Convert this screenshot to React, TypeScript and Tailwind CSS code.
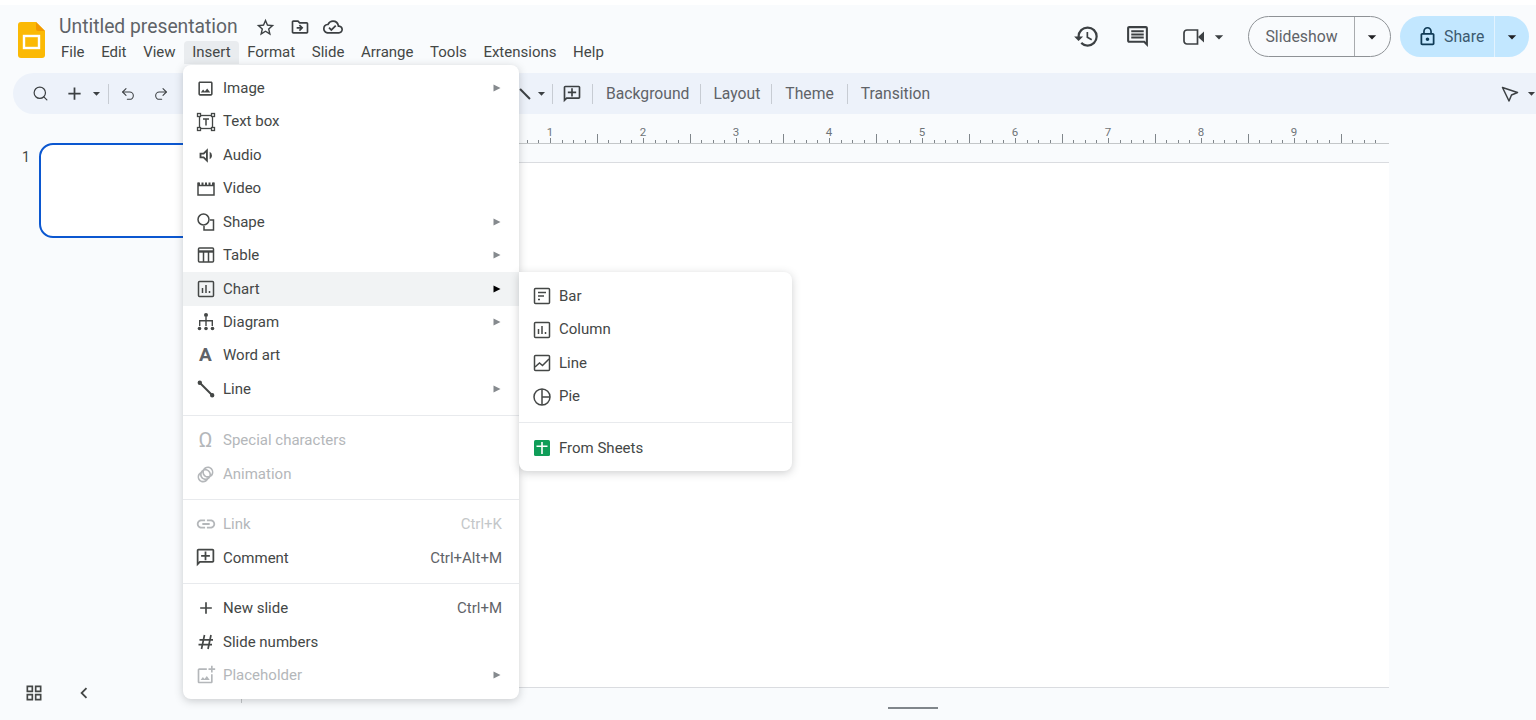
import type { ReactNode } from "react";
import { Redo2, Search, Undo2 } from "lucide-react";
import {
  MdAdd, MdArrowDropDown, MdChevronLeft, MdHistory, MdLink, MdLockOutline, MdOutlineAddComment,
  MdOutlineAddPhotoAlternate, MdOutlineAnimation, MdOutlineCloudDone, MdOutlineComment,
  MdOutlineDriveFileMove, MdOutlineGridView, MdOutlineImage, MdOutlineVolumeDown,
  MdStarBorder,
} from "react-icons/md";

const MENUS = ["File", "Edit", "View", "Insert", "Format", "Slide", "Arrange", "Tools", "Extensions", "Help"];

function Stroke({ children }: { children: ReactNode }) {
  return (
    <svg width="20" height="20" viewBox="0 0 20 20" fill="none" stroke="currentColor" strokeWidth="1.5">
      {children}
    </svg>
  );
}

const TextBoxIcon = () => (
  <Stroke>
    <rect x="3.5" y="3.5" width="13" height="13" strokeWidth="1.3" />
    <rect x="1.5" y="1.5" width="3" height="3" fill="white" strokeWidth="1.3" />
    <rect x="15.5" y="1.5" width="3" height="3" fill="white" strokeWidth="1.3" />
    <rect x="1.5" y="15.5" width="3" height="3" fill="white" strokeWidth="1.3" />
    <rect x="15.5" y="15.5" width="3" height="3" fill="white" strokeWidth="1.3" />
    <path d="M7 7h6M10 7v6.5" />
  </Stroke>
);
const VideoIcon = () => (
  <Stroke>
    <path d="M2 3.5V16h16V3.5" />
    <path d="M2 6.5h16" />
    <path d="M2 5h16" strokeWidth="3" strokeDasharray="2 1.5" />
  </Stroke>
);
const ShapeIcon = () => (
  <Stroke>
    <circle cx="7.5" cy="7.5" r="5.5" />
    <path d="M14 8h3.5v10H8v-4" />
  </Stroke>
);
const TableIcon = () => (
  <Stroke>
    <rect x="2.5" y="3" width="15" height="14" rx="1" />
    <path d="M2.5 6.5h15" strokeWidth="2.4" />
    <path d="M7.5 7v10M12.5 7v10" />
  </Stroke>
);
const ChartIcon = () => (
  <Stroke>
    <rect x="2.5" y="2.5" width="15" height="15" rx="1" />
    <path d="M6.5 14V9M10 14V6M13.5 14v-2" />
  </Stroke>
);
const BarIcon = () => (
  <Stroke>
    <rect x="2.5" y="2.5" width="15" height="15" rx="1" />
    <path d="M6 6.5h8M6 10h6M6 13.5h2" />
  </Stroke>
);
const LineChartIcon = () => (
  <Stroke>
    <rect x="2.5" y="2.5" width="15" height="15" rx="1" />
    <path d="M3 14l4.5-4 3 2.5L17 6" />
  </Stroke>
);
const PieIcon = () => (
  <Stroke>
    <circle cx="10" cy="10" r="8" />
    <path d="M10 2v16M10 10h8" />
  </Stroke>
);
const DiagramIcon = () => (
  <svg width="20" height="20" viewBox="0 0 20 20" fill="currentColor">
    <circle cx="10" cy="3" r="2" />
    <path d="M9.3 5h1.4v9H9.3zM3 8h14v1.4H3z" />
    <path d="M3 8h1.4v6H3zM15.6 8H17v6h-1.4z" />
    <circle cx="3.5" cy="16.5" r="1.8" />
    <circle cx="10" cy="16.5" r="1.8" />
    <circle cx="16.5" cy="16.5" r="1.8" />
  </svg>
);
const LineIcon = () => (
  <svg width="20" height="20" viewBox="0 0 20 20" fill="currentColor" stroke="currentColor" strokeWidth="2">
    <path d="M4 4L16 16" />
    <circle cx="3.8" cy="3.8" r="1.2" />
    <circle cx="16.2" cy="16.2" r="1.2" />
  </svg>
);
const HashIcon = () => (
  <svg width="20" height="20" viewBox="0 0 20 20" fill="none" stroke="currentColor" strokeWidth="1.7">
    <path d="M8.5 3L5.5 17M15 3L12 17M3.5 7.8H17M2.5 12.6H16" />
  </svg>
);
const SheetsIcon = () => (
  <svg width="16" height="16" viewBox="0 0 16 16">
    <rect width="16" height="16" rx="1.5" fill="#0f9d58" />
    <path d="M2.5 5.5h11v1.5H8.8v7H7.2V7H2.5zM7.2 2h1.6v3.5H7.2z" fill="white" />
  </svg>
);
const CursorIcon = () => (
  <svg width="20" height="20" viewBox="0 0 20 20" fill="none" stroke="currentColor" strokeWidth="1.5" strokeLinejoin="round" className="ml-auto">
    <path d="M2.5 3.5L17.5 8.5l-6 2.5-2.5 6z" />
  </svg>
);
const MeetIcon = () => (
  <svg width="22" height="18" viewBox="0 0 22 18" fill="none" stroke="currentColor" strokeWidth="1.7" className="ml-[33px]">
    <path d="M4 2h10.5v14H4a3 3 0 0 1-3-3V5a3 3 0 0 1 3-3z" />
    <path d="M15 9l6-5.5v11z" fill="currentColor" stroke="none" />
  </svg>
);

function Arrow({ dark }: { dark?: boolean }) {
  return (
    <svg width="8" height="8" viewBox="0 0 8 8" className={dark ? "text-black" : "text-[#858a8e]"}>
      <path d="M0.5 0.5L7.5 4L0.5 7.5z" fill="currentColor" />
    </svg>
  );
}

type Item = { icon: ReactNode; label: string; arrow?: boolean; active?: boolean; off?: boolean; keys?: string };

function Row({ icon, label, arrow, active, off, keys }: Item) {
  return (
    <div className={`flex h-[33.45px] items-center pl-[11.5px] pr-[17px] ${active ? "bg-[#f1f3f4]" : ""} ${off ? "text-[#b4b7ba]" : "text-[#444746]"}`}>
      <span className="flex h-[22px] w-[22px] items-center justify-center text-[19px]">{icon}</span>
      <span className="ml-[6.5px] flex-1 text-[15px]">{label}</span>
      {keys && <span className={`text-[15px] ${off ? "text-[#c4c7c9]" : "text-[#5f6368]"}`}>{keys}</span>}
      {arrow && <span className="mr-[1px] flex"><Arrow dark={active} /></span>}
    </div>
  );
}

const Divider = ({ first }: { first?: boolean }) => (
  <div className={`mb-[8px] h-[1px] bg-[#e8eaed] ${first ? "mt-[9px]" : "mt-[8px]"}`} />
);

const GROUP_ONE: Item[] = [
  { icon: <MdOutlineImage />, label: "Image", arrow: true },
  { icon: <TextBoxIcon />, label: "Text box" },
  { icon: <MdOutlineVolumeDown className="text-[23px]" />, label: "Audio" },
  { icon: <VideoIcon />, label: "Video" },
  { icon: <ShapeIcon />, label: "Shape", arrow: true },
  { icon: <TableIcon />, label: "Table", arrow: true },
  { icon: <ChartIcon />, label: "Chart", arrow: true, active: true },
  { icon: <DiagramIcon />, label: "Diagram", arrow: true },
  { icon: <span className="text-[19px] font-bold text-[#5f6368]">A</span>, label: "Word art" },
  { icon: <LineIcon />, label: "Line", arrow: true },
];
const GROUP_TWO: Item[] = [
  { icon: <span className="text-[21px]">Ω</span>, label: "Special characters", off: true },
  { icon: <MdOutlineAnimation />, label: "Animation", off: true },
];
const GROUP_THREE: Item[] = [
  { icon: <MdLink className="text-[22px]" />, label: "Link", off: true, keys: "Ctrl+K" },
  { icon: <MdOutlineAddComment className="-scale-x-100 text-[21px]" />, label: "Comment", keys: "Ctrl+Alt+M" },
];
const GROUP_FOUR: Item[] = [
  { icon: <MdAdd className="text-[20px]" />, label: "New slide", keys: "Ctrl+M" },
  { icon: <HashIcon />, label: "Slide numbers" },
  { icon: <MdOutlineAddPhotoAlternate className="text-[20px]" />, label: "Placeholder", arrow: true, off: true },
];
const CHART_ITEMS: Item[] = [
  { icon: <BarIcon />, label: "Bar" },
  { icon: <ChartIcon />, label: "Column" },
  { icon: <LineChartIcon />, label: "Line" },
  { icon: <PieIcon />, label: "Pie" },
];

function Ruler() {
  const ticks = Array.from({ length: 80 }, (_, k) => k);
  return (
    <svg width="932" height="30" className="block">
      <path d="M0 29.5H932" stroke="#c4c7c9" />
      {ticks.map((k) => {
        const x = Math.round(k * 11.625) + 0.5;
        const top = k % 8 === 4 ? 20 : k % 8 === 0 ? 24 : 26;
        return <path key={k} d={`M${x} ${top}V29`} stroke="#80868b" />;
      })}
      {[1, 2, 3, 4, 5, 6, 7, 8, 9].map((n) => (
        <text key={n} x={n * 93} y="22" textAnchor="middle" fontSize="11.5" fill="#6f7478">{n}</text>
      ))}
    </svg>
  );
}

const Sep = ({ className }: { className: string }) => <div className={`h-5 w-[1px] shrink-0 bg-[#c7ccd3] ${className}`} />;

export default function App() {
  return (
    <div className="relative h-[720px] w-[1536px] overflow-hidden bg-[#f9fbfd] font-['Roboto',sans-serif] text-[#444746]">
      <div className="h-[5px] bg-white" />

      {/* title bar */}
      <header className="flex h-[68px] items-start">
        <svg width="27" height="36" viewBox="0 0 27 36" className="ml-[18px] mt-[17px] shrink-0">
          <path d="M3 0H18L27 9V33a3 3 0 0 1-3 3H3a3 3 0 0 1-3-3V3a3 3 0 0 1 3-3z" fill="#fbb905" />
          <path d="M18 0L27 9H20a2 2 0 0 1-2-2z" fill="#f29900" />
          <rect x="6" y="14" width="15" height="12" fill="none" stroke="white" strokeWidth="2.4" />
        </svg>
        <div className="ml-[6px] mt-[8px]">
          <div className="flex h-7 items-center pl-2">
            <span className="w-[188px] pt-[1px] text-[19.3px] text-[#5f6368]">Untitled presentation</span>
            <MdStarBorder className="ml-[8px] text-[21px] text-[#3c4043]" />
            <MdOutlineDriveFileMove className="ml-[14px] text-[20px] text-[#3c4043]" />
            <MdOutlineCloudDone className="ml-[13px] text-[20px] text-[#3c4043]" />
          </div>
          <nav className="ml-[1.7px] flex h-[23px] items-center">
            {MENUS.map((m) => (
              <span key={m} className={`flex h-[23px] items-center rounded-t px-[8.3px] text-[15px] ${m === "Insert" ? "bg-[#e9ecef]" : ""}`}>{m}</span>
            ))}
          </nav>
        </div>
        <div className="ml-auto mt-[11px] flex items-center pr-[7px]">
          <MdHistory className="text-[27px] text-[#3c4043]" />
          <MdOutlineComment className="ml-[25px] text-[25px] text-[#3c4043]" />
          <span className="text-[#3c4043]"><MeetIcon /></span>
          <MdArrowDropDown className="ml-[4px] text-[20px] text-[#3c4043]" />
          <div className="ml-[19px] flex h-[41px] w-[143px] items-center rounded-full border border-[#8e9296]">
            <span className="w-[105px] text-center text-[15.8px] text-[#5f6368]">Slideshow</span>
            <span className="h-full w-[1px] bg-[#a8abae]" />
            <MdArrowDropDown className="ml-[7px] text-[20px] text-[#202124]" />
          </div>
          <div className="ml-[9px] flex h-[41px] w-[129px] items-center rounded-full bg-[#c2e7ff] text-[#0e3a55]">
            <MdLockOutline className="ml-[17px] text-[21px]" />
            <span className="ml-[6px] w-[41px] text-[15.8px] text-[#3c5a70]">Share</span>
            <span className="ml-[9px] h-full w-[1px] bg-[#e3f3ff]" />
            <MdArrowDropDown className="ml-[7px] text-[20px] text-[#202124]" />
          </div>
        </div>
      </header>

      {/* toolbar */}
      <div className="ml-[13px] flex h-[41px] items-center rounded-l-full bg-[#edf2fa] text-[#3c4043]">
        <Search size={17} strokeWidth={1.7} className="ml-[19px]" />
        <MdAdd className="ml-[15px] text-[21px]" />
        <MdArrowDropDown className="ml-[3px] text-[17px]" />
        <Sep className="ml-[3px]" />
        <Undo2 size={16} strokeWidth={1.6} className="ml-[11px]" />
        <Redo2 size={16} strokeWidth={1.6} className="ml-[17px]" />
        <span className="ml-[349px] h-[2px] w-[14px] rotate-45 bg-[#3c4043]" />
        <MdArrowDropDown className="ml-[1px] text-[17px]" />
        <Sep className="ml-[2px]" />
        <MdOutlineAddComment className="ml-[9px] -scale-x-100 text-[20px]" />
        <Sep className="ml-[10px]" />
        <span className="ml-[13px] text-[15.7px] text-[#5f6368]">Background</span>
        <Sep className="ml-[11px]" />
        <span className="ml-[12px] text-[15.7px] text-[#5f6368]">Layout</span>
        <Sep className="ml-[11px]" />
        <span className="ml-[13px] text-[15.7px] text-[#5f6368]">Theme</span>
        <Sep className="ml-[13px]" />
        <span className="ml-[13px] text-[15.7px] text-[#5f6368]">Transition</span>
        <CursorIcon />
        <MdArrowDropDown className="-mr-[3.5px] ml-[3px] text-[17px]" />
      </div>

      {/* filmstrip and canvas */}
      <div className="flex h-[606px]">
        <aside className="relative flex w-[242px] shrink-0 flex-col justify-between">
          <div className="flex pt-[29px]">
            <span className="ml-[22px] mt-[4px] w-[17px] text-[14px]">1</span>
            <div className="h-[95px] w-[170px] rounded-[14px] border-2 border-[#0b57d0] bg-white" />
          </div>
          <div className="mb-[16px] flex items-center pl-[24px] text-[#444746]">
            <MdOutlineGridView className="text-[20px]" />
            <MdChevronLeft className="ml-[29px] text-[22px]" />
          </div>
          <span className="absolute bottom-[17px] right-0 h-[5px] w-[1px] bg-[#c4c7c9]" />
        </aside>
        <main className="flex-1">
          <div className="ml-[215px]">
            <Ruler />
            <div className="mt-[18px] h-[526px] w-[932px] border-y border-[#dadce0] bg-white" />
          </div>
          <div className="ml-[646px] mt-[19px] h-[2px] w-[50px] bg-[#80868b]" />
        </main>
      </div>

      {/* insert menu */}
      <div className="absolute left-[183px] top-[65px] h-[634px] w-[336px] rounded-lg bg-white pt-[6.5px] shadow-[0_2px_8px_rgba(60,64,67,0.25)]">
        {GROUP_ONE.map((it) => <Row key={it.label} {...it} />)}
        <Divider first />
        {GROUP_TWO.map((it) => <Row key={it.label} {...it} />)}
        <Divider />
        {GROUP_THREE.map((it) => <Row key={it.label} {...it} />)}
        <Divider />
        {GROUP_FOUR.map((it) => <Row key={it.label} {...it} />)}
      </div>

      {/* chart submenu */}
      <div className="absolute left-[519px] top-[272px] h-[199px] w-[273px] rounded-r-lg rounded-bl-lg bg-white pt-[7.5px] shadow-[0_2px_8px_rgba(60,64,67,0.25)]">
        {CHART_ITEMS.map((it) => <Row key={it.label} {...it} />)}
        <Divider first />
        <Row icon={<SheetsIcon />} label="From Sheets" />
      </div>
    </div>
  );
}
